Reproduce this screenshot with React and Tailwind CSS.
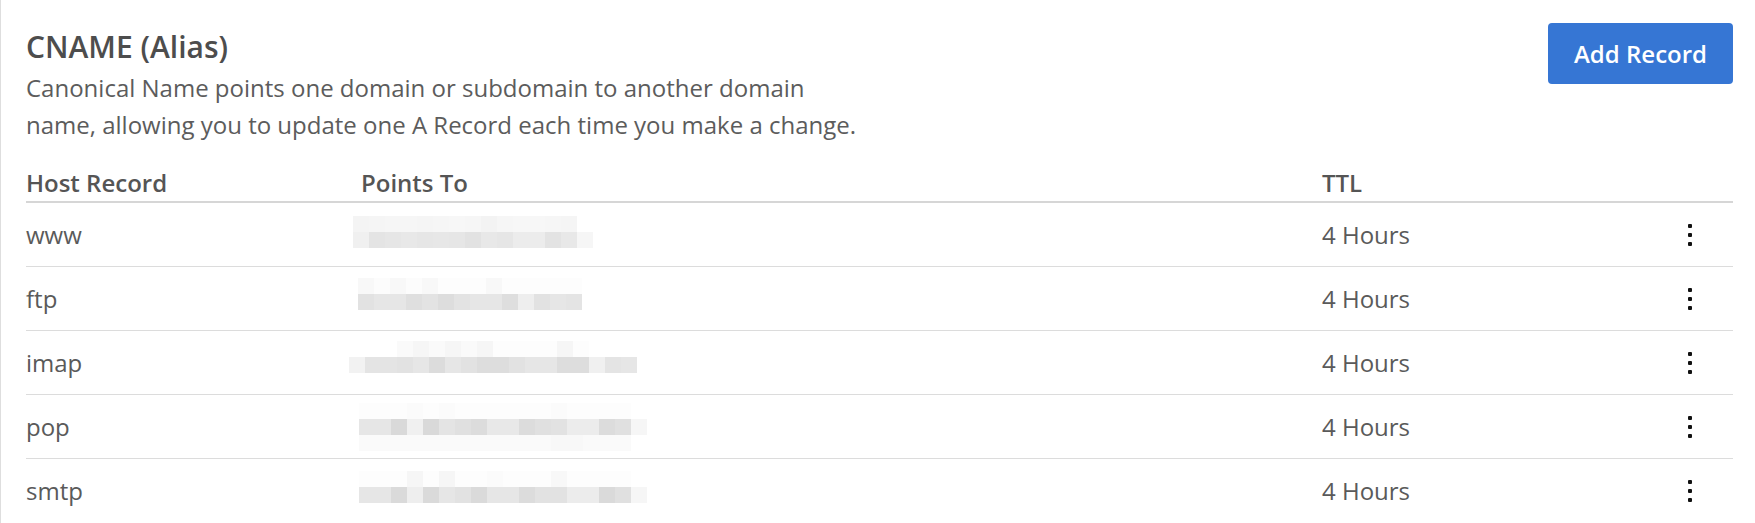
import React from "react";

const rows = [
  {
    host: "www",
    pos: "mt-[13px] -ml-[8px]",
    grid: [
      ["f4","f5","f6","f6","f5","f6","f7","f6","f3","f6","f7","f7","f6","f5",null],
      ["f0","e4","e6","e8","e6","e7","e6","e2","e8","e6","ec","ec","e3","e8","f6"],
      [null,null,null,null,null,null,null,null,null,null,null,null,null,null,null],
    ],
  },
  {
    host: "ftp",
    pos: "mt-[11px] -ml-[3px]",
    grid: [
      ["f8","fc","f8","fc","f8","fd","fd","fd","f8","fd","fd","fd","fd","fd"],
      ["e2","e6","e6","df","e3","dd","e3","e6","e6","de","ee","e2","e6","e4"],
      [null,null,null,null,null,null,null,null,null,null,null,null,null,null],
    ],
  },
  {
    host: "imap",
    pos: "mt-[10px] -ml-[12px]",
    grid: [
      [null,null,null,"fa","f6","fa","f6","fa","f6","fd","fd","fd","fd","f6","fd",null,null,null],
      ["f2","e4","e4","e2","e6","dc","e6","e2","dd","dd","e2","e6","e6","dd","dd","f0","e4","e6"],
      [null,null,null,null,null,null,null,null,null,null,null,null,null,null,null,null,null,null],
    ],
  },
  {
    host: "pop",
    pos: "mt-[8px] -ml-[2px]",
    grid: [
      ["fd","fd","fd","fb","fd","fb","fd","fd","fd","fd","fd","fd","fb","fd","fd","fd","fd",null],
      ["e6","e6","d9","f0","d9","e4","e0","dc","e8","e8","dc","e0","e2","ec","ec","dc","e0","f6"],
      ["fa","fa","fa","fa","fa","fa","fa","fa","fa","fa","fa","fa","f8","f8","fa","fa","fa",null],
    ],
  },
  {
    host: "smtp",
    pos: "mt-[12px] -ml-[2px]",
    grid: [
      ["fd","fd","fd","f6","fd","f6","fd","fd","fb","fd","fd","fd","f8","fd","fd","fd","fd",null],
      ["e6","e6","da","ee","da","e6","e2","da","e6","e6","dc","e2","e2","ec","ec","da","e0","f6"],
      [null,null,null,null,null,null,null,null,null,null,null,null,null,null,null,null,null,null],
    ],
  },
];

function Mosaic({ grid, pos }) {
  return (
    <div className={`flex flex-col ${pos}`}>
      {grid.map((line, i) => (
        <div key={i} className="flex">
          {line.map((c, j) => (
            <div
              key={j}
              className="w-4 h-4"
              style={{ backgroundColor: c ? `#${c}${c}${c}` : "transparent" }}
            />
          ))}
        </div>
      ))}
    </div>
  );
}

function Kebab() {
  return (
    <div className="flex flex-col items-center gap-[5px]">
      <span className="block w-[4px] h-[4px] rounded-[1px] bg-[#111]" />
      <span className="block w-[4px] h-[4px] rounded-[1px] bg-[#111]" />
      <span className="block w-[4px] h-[4px] rounded-[1px] bg-[#111]" />
    </div>
  );
}

export default function App() {
  return (
    <div className="min-h-screen w-full bg-white border-l border-[#dedede] pl-[25px] pr-[22px] pt-[23px] font-['Open_Sans',sans-serif] overflow-hidden">
      <div className="flex items-start justify-between">
        <div className="mt-[4px]">
          <h1 className="text-[30px] leading-[40px] font-semibold text-[#4d4d4d]">
            CNAME (Alias)
          </h1>
          <p className="mt-[2px] text-[24px] leading-[37px] text-[#5c5c5c]">
            Canonical Name points one domain or subdomain to another domain
            <br />
            name, allowing you to update one A Record each time you make a change.
          </p>
        </div>
        <button className="w-[185px] h-[61px] rounded-[4px] bg-[#3676d4] text-white text-[24px] font-semibold flex items-center justify-center">
          Add Record
        </button>
      </div>

      <div className="mt-[22px] grid grid-cols-[335px_961px_1fr_86px] h-[38px] border-b-2 border-[#d6d6d6] text-[24px] leading-[36px] font-semibold text-[#555555]">
        <div>Host Record</div>
        <div>Points To</div>
        <div>TTL</div>
        <div />
      </div>

      {rows.map((r, idx) => (
        <div
          key={r.host}
          className={
            idx === rows.length - 1
              ? "grid grid-cols-[335px_961px_1fr_86px] h-[64px] items-center text-[24px] leading-[36px] text-[#5a5a5a]"
              : "grid grid-cols-[335px_961px_1fr_86px] h-[64px] border-b border-[#dcdcdc] items-center text-[24px] leading-[36px] text-[#5a5a5a]"
          }
        >
          <div>{r.host}</div>
          <div className="self-start">
            <Mosaic grid={r.grid} pos={r.pos} />
          </div>
          <div>4 Hours</div>
          <div className="flex justify-center">
            <Kebab />
          </div>
        </div>
      ))}
    </div>
  );
}
